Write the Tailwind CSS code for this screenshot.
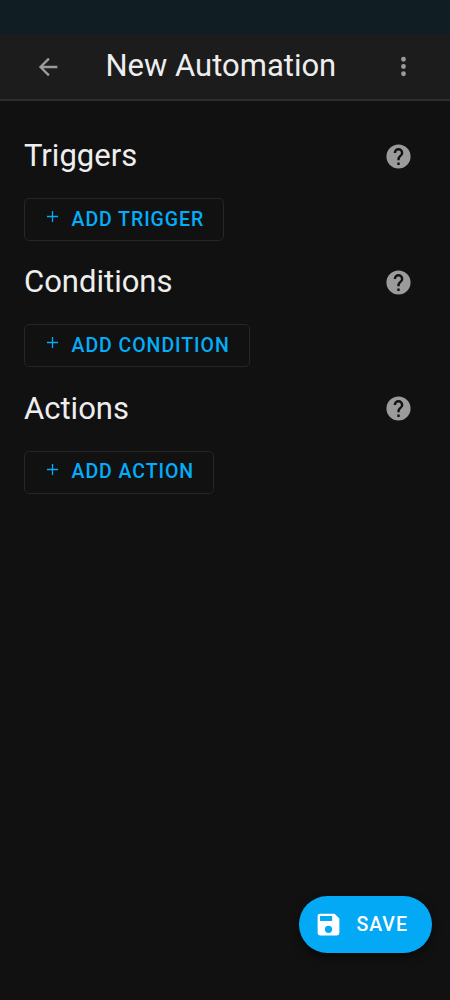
<!DOCTYPE html>
<html lang="en">
<head>
<meta charset="utf-8">
<title>New Automation</title>
<script src="https://cdn.jsdelivr.net/npm/@tailwindcss/browser@4"></script>
</head>
<body class="bg-[#111111] font-['Roboto',sans-serif] text-[#eeeeee]">
<div class="flex h-[1000px] w-[450px] flex-col overflow-hidden">
  <div class="h-[34px] shrink-0 bg-[#101e24]"></div>
  <header class="flex h-[67px] shrink-0 items-center border-b-2 border-[#2e2e2e] bg-[#1c1c1c] pr-[32px] pl-[33.500px]">
    <svg class="size-7 shrink-0 text-[#9b9b9b]" viewBox="0 0 24 24" fill="currentColor"><path d="M20 11v2H8l5.5 5.5-1.42 1.42L4.16 12l7.92-7.92L13.5 5.500 8 11h12Z"/></svg>
    <h1 class="mb-[2px] ml-[44px] flex-1 text-[31px] leading-9 whitespace-nowrap">New Automation</h1>
    <svg class="size-[29px] shrink-0 text-[#9b9b9b]" viewBox="0 0 24 24" fill="currentColor"><path d="M12 16a2 2 0 1 1 0 4 2 2 0 0 1 0-4m0-6a2 2 0 1 1 0 4 2 2 0 0 1 0-4m0-6a2 2 0 1 1 0 4 2 2 0 0 1 0-4Z"/></svg>
  </header>
  <main class="flex flex-1 flex-col pt-[34px] pr-[37px] pl-6">
    <section class="h-[126.300px]">
      <div class="flex h-[42px] items-center justify-between"><h2 class="text-[31px] leading-[42px]">Triggers</h2><svg class="mt-[1px] size-[29px] text-[#9b9b9b]" viewBox="0 0 24 24" fill="currentColor"><path d="M15.070 11.250l-.9.920C13.450 12.890 13 13.500 13 15h-2v-.5c0-1.110.45-2.110 1.170-2.830l1.240-1.260c.37-.36.59-.86.59-1.410a2 2 0 0 0-4 0H8a4 4 0 0 1 8 0c0 .88-.36 1.670-.93 2.250M13 19h-2v-2h2M12 2a10 10 0 1 0 0 20 10 10 0 0 0 0-20Z"/></svg></div>
      <button class="mt-[21px] flex h-[43px] w-[200px] items-center rounded-[5px] border border-[#262626] pl-[18px] font-medium text-[#03adfa]"><svg class="mr-[9.500px] mb-[6px] size-[19px]" viewBox="0 0 24 24" fill="currentColor"><path d="M19 12.800h-6.200v6.200h-1.600v-6.200H5v-1.600h6.200V5h1.600v6.200H19v1.600Z"/></svg><span class="text-[19.5px] tracking-[0.95px] whitespace-nowrap">ADD TRIGGER</span></button>
    </section>
    <section class="h-[126.300px]">
      <div class="flex h-[42px] items-center justify-between"><h2 class="text-[31px] leading-[42px]">Conditions</h2><svg class="mt-[1px] size-[29px] text-[#9b9b9b]" viewBox="0 0 24 24" fill="currentColor"><path d="M15.070 11.250l-.9.920C13.450 12.890 13 13.500 13 15h-2v-.5c0-1.110.45-2.110 1.170-2.830l1.240-1.260c.37-.36.59-.86.59-1.410a2 2 0 0 0-4 0H8a4 4 0 0 1 8 0c0 .88-.36 1.670-.93 2.250M13 19h-2v-2h2M12 2a10 10 0 1 0 0 20 10 10 0 0 0 0-20Z"/></svg></div>
      <button class="mt-[21px] flex h-[43px] w-[226px] items-center rounded-[5px] border border-[#262626] pl-[18px] font-medium text-[#03adfa]"><svg class="mr-[9.500px] mb-[6px] size-[19px]" viewBox="0 0 24 24" fill="currentColor"><path d="M19 12.800h-6.200v6.200h-1.600v-6.200H5v-1.600h6.200V5h1.600v6.200H19v1.600Z"/></svg><span class="text-[19.5px] tracking-[0.95px] whitespace-nowrap">ADD CONDITION</span></button>
    </section>
    <section class="h-[126.300px]">
      <div class="flex h-[42px] items-center justify-between"><h2 class="text-[31px] leading-[42px]">Actions</h2><svg class="size-[29px] text-[#9b9b9b]" viewBox="0 0 24 24" fill="currentColor"><path d="M15.070 11.250l-.9.920C13.450 12.890 13 13.500 13 15h-2v-.5c0-1.110.45-2.110 1.170-2.830l1.240-1.260c.37-.36.59-.86.59-1.410a2 2 0 0 0-4 0H8a4 4 0 0 1 8 0c0 .88-.36 1.670-.93 2.250M13 19h-2v-2h2M12 2a10 10 0 1 0 0 20 10 10 0 0 0 0-20Z"/></svg></div>
      <button class="mt-[21px] flex h-[43px] w-[190px] items-center rounded-[5px] border border-[#262626] pl-[18px] font-medium text-[#03adfa]"><svg class="mr-[9.500px] mb-[6px] size-[19px]" viewBox="0 0 24 24" fill="currentColor"><path d="M19 12.800h-6.200v6.200h-1.600v-6.200H5v-1.600h6.200V5h1.600v6.200H19v1.600Z"/></svg><span class="text-[19.5px] tracking-[0.95px] whitespace-nowrap">ADD ACTION</span></button>
    </section>
  </main>
  <button class="mr-[18px] mb-[47px] flex h-[57px] w-[133px] shrink-0 items-center self-end rounded-full bg-[#03a9f4] pl-[14.500px] font-medium text-white shadow-[0_4px_8px_rgba(0,0,0,0.5)]"><svg class="mr-[14px] size-[29px]" viewBox="0 0 24 24" fill="currentColor"><path d="M15 9H5V5h10m-3 14a3 3 0 1 1 0-6 3 3 0 0 1 0 6m5-16H5a2 2 0 0 0-2 2v14a2 2 0 0 0 2 2h14a2 2 0 0 0 2-2V7l-4-4Z"/></svg><span class="text-[19.5px] tracking-[0.95px]">SAVE</span></button>
</div>
</body>
</html>
